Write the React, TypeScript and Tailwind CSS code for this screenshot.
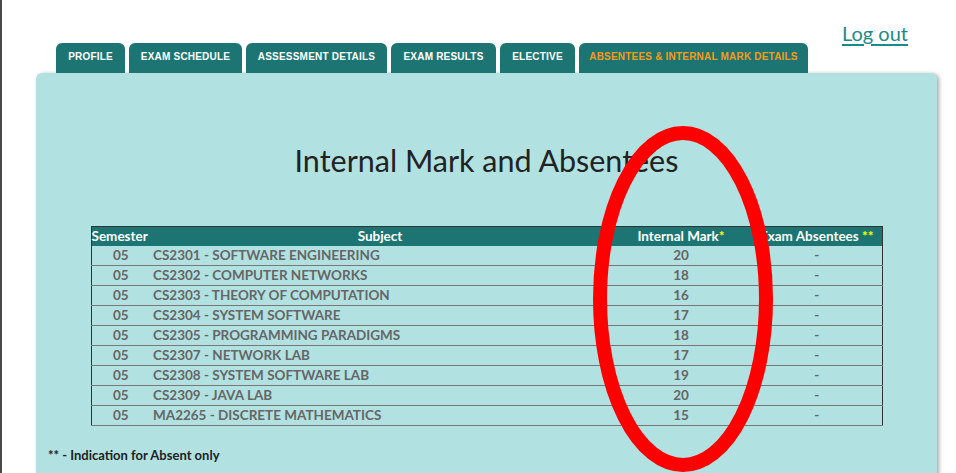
import React from "react";

const tabs = [
  { label: "PROFILE", w: "w-[69px]" },
  { label: "EXAM SCHEDULE", w: "w-[113px]" },
  { label: "ASSESSMENT DETAILS", w: "w-[141px]" },
  { label: "EXAM RESULTS", w: "w-[105px]" },
  { label: "ELECTIVE", w: "w-[75px]" },
  { label: "ABSENTEES & INTERNAL MARK DETAILS", w: "w-[229px]", active: true },
];

const rows = [
  ["05", "CS2301 - SOFTWARE ENGINEERING", "20", "-"],
  ["05", "CS2302 - COMPUTER NETWORKS", "18", "-"],
  ["05", "CS2303 - THEORY OF COMPUTATION", "16", "-"],
  ["05", "CS2304 - SYSTEM SOFTWARE", "17", "-"],
  ["05", "CS2305 - PROGRAMMING PARADIGMS", "18", "-"],
  ["05", "CS2307 - NETWORK LAB", "17", "-"],
  ["05", "CS2308 - SYSTEM SOFTWARE LAB", "19", "-"],
  ["05", "CS2309 - JAVA LAB", "20", "-"],
  ["05", "MA2265 - DISCRETE MATHEMATICS", "15", "-"],
];

export default function App() {
  return (
    <div className="relative h-[473px] w-[956px] overflow-hidden border-l-2 border-[#4a4a4a] bg-white font-['Lato',sans-serif]">
      {/* top bar with log out */}
      <div className="flex h-[43px] items-start justify-end pr-[48px] pt-[22px]">
        <a className="text-[20px] leading-[22px] text-[#1b8a8a] underline decoration-[2px] underline-offset-[3px]">
          Log out
        </a>
      </div>

      <div className="pl-[34px]">
        {/* tabs */}
        <div className="ml-[20px] flex gap-[4px]">
          {tabs.map((t) => (
            <div
              key={t.label}
              className={`${t.w} flex h-[30px] justify-center rounded-t-[6px] bg-[#1c7573] pt-[8px] font-['Liberation_Sans',Arial,sans-serif] text-[10px] font-bold leading-[12px] tracking-[0.2px] ${
                t.active ? "text-[#f39c1a]" : "text-white"
              }`}
            >
              {t.label}
            </div>
          ))}
        </div>

        {/* panel */}
        <div className="h-[420px] w-[901px] rounded-[6px] bg-[#b1e1e1] shadow-[2px_1px_4px_rgba(0,0,0,0.35)]">
          <h1 className="pt-[67px] text-center text-[30.5px] font-normal leading-[40px] text-[#222]">
            Internal Mark and Absentees
          </h1>

          <table className="mx-auto mt-[46px] w-[792px] border-collapse border-x border-[#333] text-[13.5px] font-bold leading-[19px]">
            <thead>
              <tr className="border-t border-[#333] bg-[#1c7573] text-white">
                <th className="w-[59px] text-left font-bold">Semester</th>
                <th className="w-[460px] text-center font-bold">Subject</th>
                <th className="w-[142px] text-center font-bold">
                  Internal Mark<span className="text-[#ffff00]">*</span>
                </th>
                <th className="whitespace-nowrap text-center font-bold">
                  Exam Absentees <span className="text-[#ffff00]">**</span>
                </th>
              </tr>
            </thead>
            <tbody className="text-[#666]">
              {rows.map((r) => (
                <tr key={r[1]} className="border-b border-[#777]">
                  <td className="text-center">{r[0]}</td>
                  <td className="pl-[3px] text-left">{r[1]}</td>
                  <td className="text-center">{r[2]}</td>
                  <td className="text-center">{r[3]}</td>
                </tr>
              ))}
            </tbody>
          </table>

          <p className="mt-[20px] pl-[12px] text-[13px] font-bold text-[#222]">
            ** - Indication for Absent only
          </p>
        </div>
      </div>

      {/* red annotation ellipse */}
      <svg className="pointer-events-none absolute left-0 top-0" width="956" height="473">
        <ellipse cx="681" cy="299" rx="83" ry="166" fill="none" stroke="#ff0000" strokeWidth="14" />
      </svg>
    </div>
  );
}
